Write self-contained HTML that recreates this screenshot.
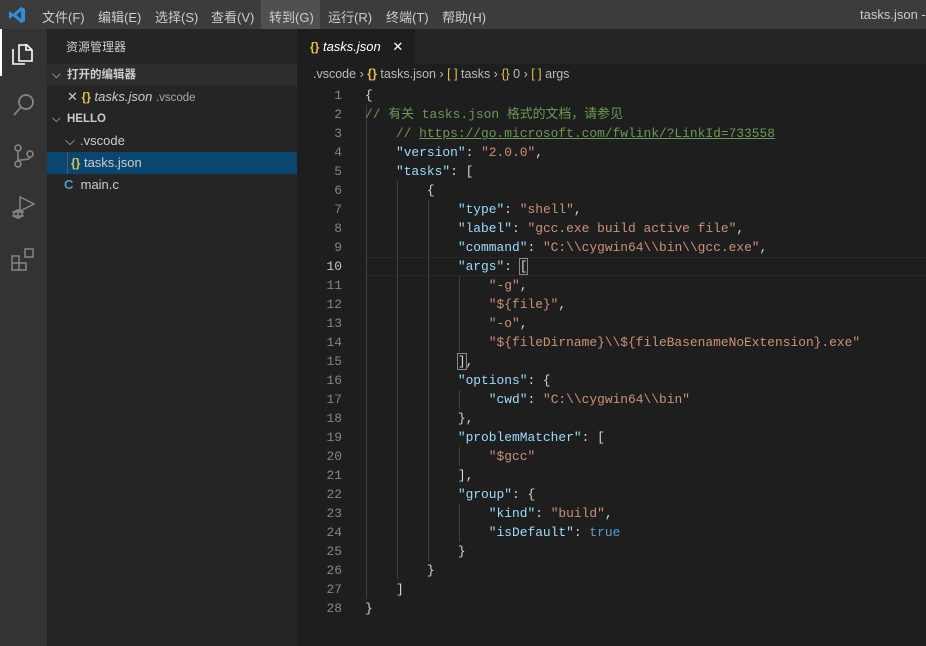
<!DOCTYPE html><html><head><meta charset="utf-8"><style>
*{margin:0;padding:0;box-sizing:border-box}
body{width:926px;height:646px;background:#1e1e1e;font-family:"Liberation Sans","Noto Sans CJK SC",sans-serif;overflow:hidden;position:relative;color:#ccc;font-size:13px}
.abs{position:absolute}
#title{left:0;top:0;width:926px;height:29px;background:#3c3c3c;overflow:hidden}
#title span{position:absolute;top:7px;font-size:13px;color:#ccc;white-space:nowrap}
#act{left:0;top:29px;width:47px;height:617px;background:#333}
#side{left:47px;top:29px;width:250px;height:617px;background:#252526}
.row{position:absolute;left:0;width:250px;height:22px;line-height:22px;font-size:13px;color:#ccc;white-space:nowrap}
#tabs{left:297px;top:29px;width:629px;height:35px;background:#252526}
#code{left:297px;top:86px;font-family:"Liberation Mono","Noto Sans CJK SC",monospace;font-size:12.9px}
.ln{position:absolute;left:0;width:45px;text-align:right;color:#858585;height:19px;line-height:19px}
.cl{position:absolute;left:68px;white-space:pre;color:#d4d4d4;height:19px;line-height:19px}
.k{color:#9cdcfe}.s{color:#ce9178}.c{color:#6a9955}.b{color:#569cd6}
.g{position:absolute;width:1px;background:#404040}
.y{color:#e8c14b}
</style></head><body>
<div id="title" class="abs">
<svg class="abs" style="left:8px;top:6px" width="18" height="18" viewBox="0 0 18 18"><path d="M13 1 L17 3 V15 L13 17 L5 10 L2 12.5 L1 12 V6 L2 5.5 L5 8 Z M13 5 L8.5 9 L13 13Z" fill="#2f8fdb" fill-rule="evenodd"/></svg>
<span style="left:42px">文件(F)</span><span style="left:98px">编辑(E)</span><span style="left:155px">选择(S)</span><span style="left:211px">查看(V)</span>
<div class="abs" style="left:261px;top:0;width:59px;height:29px;background:#505050"></div>
<span style="left:269px">转到(G)</span><span style="left:328px">运行(R)</span><span style="left:386px">终端(T)</span><span style="left:442px">帮助(H)</span>
<span style="left:860px">tasks.json - H</span>
</div>
<div id="act" class="abs">
<div class="abs" style="left:0;top:0;width:2px;height:47px;background:#fff"></div>
<svg class="abs" style="left:11px;top:11px" width="26" height="26" viewBox="0 0 26 26" fill="none" stroke="#fff" stroke-width="1.6"><path d="M8 5h8l5 5v11H8z M2 9v15h12"/><path d="M15 4v6h6"/></svg>
<svg class="abs" style="left:11px;top:63px" width="26" height="26" viewBox="0 0 26 26" fill="none" stroke="#858585" stroke-width="1.8"><circle cx="15" cy="10" r="7"/><path d="M10 15L3 23"/></svg>
<svg class="abs" style="left:11px;top:114px" width="26" height="26" viewBox="0 0 26 26" fill="none" stroke="#858585" stroke-width="1.6"><circle cx="7" cy="5" r="3"/><circle cx="7" cy="21" r="3"/><circle cx="19" cy="11" r="3"/><path d="M7 8v10M19 14c0 4-12 2-12 4"/></svg>
<svg class="abs" style="left:10px;top:166px" width="26" height="26" viewBox="0 0 26 26" fill="none" stroke="#858585" stroke-width="1.5"><path d="M10 2v14l14-7z"/><ellipse cx="8" cy="19" rx="4" ry="4"/><path d="M2 17h12M2 21h12M8 15v8"/></svg>
<svg class="abs" style="left:10px;top:218px" width="26" height="26" viewBox="0 0 26 26" fill="none" stroke="#858585" stroke-width="1.5"><path d="M2 9h7v7H2zM2 16h7v7H2zM9 16h7v7H9zM15 2h8v8h-8z"/></svg>
</div>
<div id="side" class="abs">
<div class="row" style="top:7px;left:19px;font-size:12px">资源管理器</div>
<div class="row" style="top:35px;background:#2d2d2d;font-weight:bold;font-size:11.5px;padding-left:20px"><span class="abs" style="left:5px;top:0;font-weight:normal">⌵</span>打开的编辑器</div>
<div class="row" style="top:57px;padding-left:20px"><span style="color:#ccc">✕</span> <b class="y" style="font-size:12px">{}</b> <i>tasks.json</i> <span style="font-size:11.5px;color:#aaa">.vscode</span></div>
<div class="row" style="top:79px;font-weight:bold;font-size:11.5px;padding-left:20px"><span class="abs" style="left:5px;font-weight:normal">⌵</span>HELLO</div>
<div class="row" style="top:101px;padding-left:33px"><span class="abs" style="left:18px">⌵</span>.vscode</div>
<div class="row" style="top:123px;background:#094771;padding-left:24px"><div class="abs" style="left:20px;top:0;width:1px;height:22px;background:#585858"></div><b class="y" style="font-size:12px">{}</b> tasks.json</div>
<div class="row" style="top:145px;padding-left:17px"><b style="color:#519aba">C</b>&nbsp; main.c</div>
</div>
<div id="tabs" class="abs">
<div class="abs" style="left:0;top:0;width:118px;height:35px;background:#1e1e1e;line-height:35px;padding-left:13px;color:#fff"><b class="y" style="font-size:12px">{}</b> <i>tasks.json</i> <span style="margin-left:8px">✕</span></div>
</div>
<div class="abs" style="left:313px;top:67px;font-size:12.5px;color:#bbb;white-space:pre">.vscode <span>›</span> <b class="y">{}</b> tasks.json › <span class="y">[ ]</span> tasks › <span class="y">{}</span> 0 › <span class="y">[ ]</span> args</div>
<div class="abs" style="left:365px;top:257px;width:561px;height:19px;border:1px solid #282828;border-left:none;border-right:none;background:#1e1e1e"></div>
<div id="code" class="abs">
<div class="g" style="left:69px;top:19px;height:494px"></div>
<div class="g" style="left:100px;top:95px;height:399px"></div>
<div class="g" style="left:131px;top:114px;height:361px"></div>
<div class="g" style="left:162px;top:190px;height:76px"></div>
<div class="g" style="left:162px;top:304px;height:19px"></div>
<div class="g" style="left:162px;top:361px;height:19px"></div>
<div class="g" style="left:162px;top:418px;height:38px"></div>
<div class="ln" style="top:0">1</div><div class="cl" style="top:0">{</div>
<div class="ln" style="top:19px">2</div><div class="cl c" style="top:19px">// 有关 tasks.json 格式的文档，请参见</div>
<div class="ln" style="top:38px">3</div><div class="cl c" style="top:38px">    // <u>https://go.microsoft.com/fwlink/?LinkId=733558</u></div>
<div class="ln" style="top:57px">4</div><div class="cl" style="top:57px">    <span class="k">"version"</span>: <span class="s">"2.0.0"</span>,</div>
<div class="ln" style="top:76px">5</div><div class="cl" style="top:76px">    <span class="k">"tasks"</span>: [</div>
<div class="ln" style="top:95px">6</div><div class="cl" style="top:95px">        {</div>
<div class="ln" style="top:114px">7</div><div class="cl" style="top:114px">            <span class="k">"type"</span>: <span class="s">"shell"</span>,</div>
<div class="ln" style="top:133px">8</div><div class="cl" style="top:133px">            <span class="k">"label"</span>: <span class="s">"gcc.exe build active file"</span>,</div>
<div class="ln" style="top:152px">9</div><div class="cl" style="top:152px">            <span class="k">"command"</span>: <span class="s">"C:\\cygwin64\\bin\\gcc.exe"</span>,</div>
<div class="ln" style="top:171px;color:#c6c6c6">10</div><div class="cl" style="top:171px">            <span class="k">"args"</span>: <span style="outline:1px solid #888">[</span></div>
<div class="ln" style="top:190px">11</div><div class="cl" style="top:190px">                <span class="s">"-g"</span>,</div>
<div class="ln" style="top:209px">12</div><div class="cl" style="top:209px">                <span class="s">"${file}"</span>,</div>
<div class="ln" style="top:228px">13</div><div class="cl" style="top:228px">                <span class="s">"-o"</span>,</div>
<div class="ln" style="top:247px">14</div><div class="cl" style="top:247px">                <span class="s">"${fileDirname}\\${fileBasenameNoExtension}.exe"</span></div>
<div class="ln" style="top:266px">15</div><div class="cl" style="top:266px">            <span style="outline:1px solid #888">]</span>,</div>
<div class="ln" style="top:285px">16</div><div class="cl" style="top:285px">            <span class="k">"options"</span>: {</div>
<div class="ln" style="top:304px">17</div><div class="cl" style="top:304px">                <span class="k">"cwd"</span>: <span class="s">"C:\\cygwin64\\bin"</span></div>
<div class="ln" style="top:323px">18</div><div class="cl" style="top:323px">            },</div>
<div class="ln" style="top:342px">19</div><div class="cl" style="top:342px">            <span class="k">"problemMatcher"</span>: [</div>
<div class="ln" style="top:361px">20</div><div class="cl" style="top:361px">                <span class="s">"$gcc"</span></div>
<div class="ln" style="top:380px">21</div><div class="cl" style="top:380px">            ],</div>
<div class="ln" style="top:399px">22</div><div class="cl" style="top:399px">            <span class="k">"group"</span>: {</div>
<div class="ln" style="top:418px">23</div><div class="cl" style="top:418px">                <span class="k">"kind"</span>: <span class="s">"build"</span>,</div>
<div class="ln" style="top:437px">24</div><div class="cl" style="top:437px">                <span class="k">"isDefault"</span>: <span class="b">true</span></div>
<div class="ln" style="top:456px">25</div><div class="cl" style="top:456px">            }</div>
<div class="ln" style="top:475px">26</div><div class="cl" style="top:475px">        }</div>
<div class="ln" style="top:494px">27</div><div class="cl" style="top:494px">    ]</div>
<div class="ln" style="top:513px">28</div><div class="cl" style="top:513px">}</div>
</div>
</body></html>
